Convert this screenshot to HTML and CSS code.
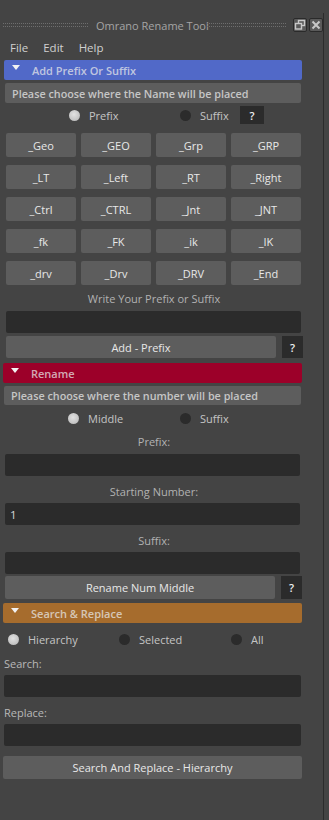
FILE: index.html
```html
<!DOCTYPE html>
<html>
<head>
<meta charset="utf-8">
<link rel="stylesheet" href="styles.css">
</head>
<body>
<div class="top-strip"></div>
<div class="window">
  <div class="titlebar">
    <div class="dots dots-left"></div>
    <div class="title">Omrano Rename Tool</div>
    <div class="dots dots-right"></div>
    <div class="tb-btn">
      <svg width="12" height="12" viewBox="0 0 12 12"><rect x="4.5" y="1.5" width="6" height="5" fill="none" stroke="#c8c8c8" stroke-width="1.4"/><rect x="1.5" y="4.5" width="6" height="5.5" fill="#5a5a5a" stroke="#c8c8c8" stroke-width="1.4"/></svg>
    </div>
    <div class="tb-btn">
      <svg width="12" height="12" viewBox="0 0 12 12"><path d="M2.5 2.5 L9.5 9.5 M9.5 2.5 L2.5 9.5" stroke="#c8c8c8" stroke-width="2"/></svg>
    </div>
  </div>
  <div class="menubar">
    <span class="menu">File</span>
    <span class="menu">Edit</span>
    <span class="menu">Help</span>
  </div>

  <div class="header blue"><span class="tri"></span><span class="htext">Add Prefix Or Suffix</span></div>
  <div class="label-box lb1">Please choose where the Name will be placed</div>
  <div class="radio-row rr1">
    <div class="radio r-prefix"><span class="dot on"></span>Prefix</div>
    <div class="radio r-suffix"><span class="dot"></span>Suffix</div>
    <div class="qbox qsmall">?</div>
  </div>
  <div class="grid">
    <div class="btn">_Geo</div><div class="btn">_GEO</div><div class="btn">_Grp</div><div class="btn">_GRP</div>
    <div class="btn">_LT</div><div class="btn">_Left</div><div class="btn">_RT</div><div class="btn">_Right</div>
    <div class="btn">_Ctrl</div><div class="btn">_CTRL</div><div class="btn">_Jnt</div><div class="btn">_JNT</div>
    <div class="btn">_fk</div><div class="btn">_FK</div><div class="btn">_ik</div><div class="btn">_IK</div>
    <div class="btn">_drv</div><div class="btn">_Drv</div><div class="btn">_DRV</div><div class="btn">_End</div>
  </div>
  <div class="caption c-write">Write Your Prefix or Suffix</div>
  <div class="field f-write"></div>
  <div class="btn-row br1">
    <div class="btn wide">Add - Prefix</div>
    <div class="qbox">?</div>
  </div>

  <div class="header red"><span class="tri"></span><span class="htext">Rename</span></div>
  <div class="label-box lb2">Please choose where the number will be placed</div>
  <div class="radio-row rr2">
    <div class="radio r-middle"><span class="dot on"></span>Middle</div>
    <div class="radio"><span class="dot"></span>Suffix</div>
  </div>
  <div class="caption c-prefix">Prefix:</div>
  <div class="field f-a"></div>
  <div class="caption c-mid">Starting Number:</div>
  <div class="field f-b">1</div>
  <div class="caption c-mid">Suffix:</div>
  <div class="field f-b"></div>
  <div class="btn-row br2">
    <div class="btn wide">Rename Num Middle</div>
    <div class="qbox">?</div>
  </div>

  <div class="header orange"><span class="tri"></span><span class="htext">Search &amp; Replace</span></div>
  <div class="radio-row rr3">
    <div class="radio r-hier"><span class="dot on"></span>Hierarchy</div>
    <div class="radio r-sel"><span class="dot"></span>Selected</div>
    <div class="radio"><span class="dot"></span>All</div>
  </div>
  <div class="left-label l-search">Search:</div>
  <div class="field f-s"></div>
  <div class="left-label l-replace">Replace:</div>
  <div class="field f-s"></div>
  <div class="btn full">Search And Replace - Hierarchy</div>
</div>
</body>
</html>
```

FILE: styles.css
```css
html, body {
  margin: 0;
  padding: 0;
  background: #444444;
  width: 329px;
  height: 820px;
  overflow: hidden;
}
body {
  font-family: "Open Sans", "Noto Sans", sans-serif;
  font-size: 11px;
  color: #c8c8c8;
}
.top-strip {
  height: 13px;
}
.window {
  width: 324px;
  height: 807px;
  border-right: 1px solid #2c2c2c;
  box-sizing: border-box;
}
.titlebar {
  height: 24px;
  display: flex;
  align-items: center;
  padding-left: 3px;
}
.dots {
  flex: none;
  height: 2px;
  border-top: 1px dotted #6e6e6e;
  border-bottom: 1px dotted #6e6e6e;
}
.dots-left { width: 85px; }
.dots-right { width: 79px; margin-right: 7px; }
.title {
  flex: none;
  color: #a4a4a4;
  font-size: 11px;
  margin: 0 13px 0 8px;
  width: 98px;
  white-space: nowrap;
}
.tb-btn {
  flex: none;
  width: 12px;
  height: 12px;
  border: 1px solid #2a2a2a;
  border-radius: 2px;
  background: #5a5a5a;
  display: flex;
}
.tb-btn + .tb-btn { margin-left: 2px; }
.menubar {
  height: 20px;
  display: flex;
  align-items: center;
  padding-left: 10px;
  gap: 15px;
}
.menu {
  color: #d0d0d0;
  font-size: 11.5px;
}
.header {
  height: 20px;
  margin: 3px 21px 0 4px;
  border-radius: 2px;
  display: flex;
  align-items: center;
  font-weight: 600;
  font-size: 11px;
}
.header .tri {
  width: 0;
  height: 0;
  border-left: 4.5px solid transparent;
  border-right: 4.5px solid transparent;
  border-top: 5px solid #f2f2f2;
  margin: 0 12px 6px 8px;
}
.header .htext { color: rgba(232,232,232,0.74); }
.blue { background: #5169c8; }
.red { background: #9c0029; margin: 5px 21px 0 3px; }
.orange { background: #a66c2d; margin: 4px 21px 0 3px; }
.label-box {
  background: #5d5d5d;
  border-radius: 2px;
  color: #c6c6c6;
  font-weight: 600;
  font-size: 10.8px;
  display: flex;
  align-items: center;
  padding-left: 7px;
  white-space: nowrap;
}
.lb1 { height: 20px; margin: 3px 22px 0 5px; }
.lb2 { height: 19px; margin: 3px 22px 0 4px; }
.radio-row {
  height: 20px;
  display: flex;
  align-items: center;
}
.rr1 { margin-top: 2px; padding-left: 69px; }
.rr2 { margin-top: 3px; padding-left: 68px; }
.rr3 { margin-top: 6px; padding-left: 8px; }
.radio {
  display: flex;
  align-items: center;
  color: #c4c4c4;
  font-size: 11px;
}
.dot {
  width: 11px;
  height: 11px;
  border-radius: 50%;
  background: #2b2b2b;
  margin-right: 9px;
}
.dot.on {
  background: radial-gradient(circle at 45% 40%, #e2e2e2 0%, #c6c6c6 60%, #a8a8a8 100%);
}
.r-prefix { width: 111px; }
.r-suffix { width: 60px; }
.r-middle { width: 112px; }
.r-hier { width: 111px; }
.r-sel { width: 112px; }
.qbox {
  background: #2b2b2b;
  color: #f0f0f0;
  font-weight: 600;
  font-size: 11px;
  display: flex;
  align-items: center;
  justify-content: center;
  width: 21px;
  height: 22px;
}
.qsmall { width: 24px; height: 18px; }
.grid {
  display: grid;
  grid-template-columns: repeat(4, 70px);
  grid-auto-rows: 24px;
  column-gap: 5px;
  row-gap: 8px;
  margin: 8px 0 0 6px;
}
.btn {
  background: #5d5d5d;
  border-radius: 2px;
  color: #e8e8e8;
  font-size: 11px;
  display: flex;
  align-items: center;
  justify-content: center;
}
.caption {
  height: 18px;
  display: flex;
  align-items: center;
  justify-content: center;
  color: #b2b2b2;
  font-size: 11px;
  width: 308px;
}
.c-write { margin-top: 4px; }
.c-prefix { margin-top: 4px; }
.c-mid { margin-top: 6px; }
.field {
  background: #2b2b2b;
  border-radius: 2px;
  height: 22px;
  color: #d8d8d8;
  font-size: 11.5px;
  display: flex;
  align-items: center;
  padding-left: 5px;
  box-sizing: border-box;
}
.f-write { margin: 4px 22px 0 6px; }
.f-a { margin: 4px 23px 0 5px; }
.f-b { margin: 3px 23px 0 5px; }
.f-s { margin: 3px 22px 0 4px; }
.btn-row {
  display: flex;
  gap: 6px;
}
.br1 { margin: 3px 0 0 6px; height: 22px; }
.br2 { margin: 2px 0 0 5px; height: 23px; }
.br2 .qbox { height: 23px; }
.wide { width: 270px; }
.left-label {
  height: 18px;
  display: flex;
  align-items: center;
  padding-left: 4px;
  color: #b8b8b8;
  font-size: 11px;
}
.l-search { margin-top: 5px; }
.l-replace { margin-top: 6px; }
.full {
  height: 23px;
  margin: 10px 21px 0 3px;
}
```
